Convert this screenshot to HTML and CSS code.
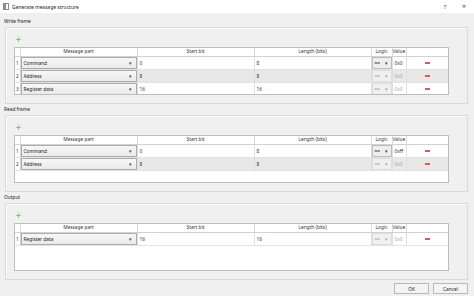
FILE: index.html
```html
<!DOCTYPE html>
<html>
<head>
<meta charset="utf-8">
<link rel="stylesheet" href="styles.css">
</head>
<body>
<div class="titlebar">
  <svg class="app-icon" width="6" height="7" viewBox="0 0 6 7"><rect x="0.5" y="0.5" width="5" height="6" fill="#fff" stroke="#8a8a8a"/><rect x="1" y="1" width="2" height="5" fill="#8c8c8c"/></svg>
  <span class="title">Generate message structure</span>
  <span class="spacer"></span>
  <span class="help">?</span>
  <span class="close">×</span>
</div>
<div class="content">
  <section class="group">
    <div class="group-title">Write frame</div>
    <div class="group-box">
      <div class="add"><svg width="5" height="5" viewBox="0 0 5 5"><path d="M2.5 0.3V4.7M0.3 2.5H4.7" stroke="#78c66a" stroke-width="1"/></svg></div>
      <div class="view">
        <table class="grid">
          <colgroup><col class="c-num"><col class="c-part"><col class="c-start"><col class="c-len"><col class="c-logic"><col class="c-val"><col class="c-rm"></colgroup>
          <thead><tr><th></th><th>Message part</th><th>Start bit</th><th>Length (bits)</th><th>Logic</th><th>Value</th><th></th></tr></thead>
          <tbody>
            <tr><td class="num">1</td><td class="cb"><div class="combo"><span>Command</span><span class="arrow">▾</span></div></td><td>0</td><td>8</td><td class="cb"><div class="combo small"><span>==</span><span class="arrow">▾</span></div></td><td>0x0</td><td class="rm"><span class="minus"></span></td></tr>
            <tr class="alt"><td class="num">2</td><td class="cb"><div class="combo"><span>Address</span><span class="arrow">▾</span></div></td><td>8</td><td>8</td><td class="cb"><div class="combo small off"><span>==</span><span class="arrow">▾</span></div></td><td class="dim">0x0</td><td class="rm"><span class="minus"></span></td></tr>
            <tr><td class="num">3</td><td class="cb"><div class="combo"><span>Register data</span><span class="arrow">▾</span></div></td><td>16</td><td>16</td><td class="cb"><div class="combo small off"><span>==</span><span class="arrow">▾</span></div></td><td class="dim">0x0</td><td class="rm"><span class="minus"></span></td></tr>
          </tbody>
        </table>
      </div>
    </div>
  </section>
  <section class="group">
    <div class="group-title">Read frame</div>
    <div class="group-box">
      <div class="add"><svg width="5" height="5" viewBox="0 0 5 5"><path d="M2.5 0.3V4.7M0.3 2.5H4.7" stroke="#78c66a" stroke-width="1"/></svg></div>
      <div class="view">
        <table class="grid">
          <colgroup><col class="c-num"><col class="c-part"><col class="c-start"><col class="c-len"><col class="c-logic"><col class="c-val"><col class="c-rm"></colgroup>
          <thead><tr><th></th><th>Message part</th><th>Start bit</th><th>Length (bits)</th><th>Logic</th><th>Value</th><th></th></tr></thead>
          <tbody>
            <tr><td class="num">1</td><td class="cb"><div class="combo"><span>Command</span><span class="arrow">▾</span></div></td><td>0</td><td>8</td><td class="cb"><div class="combo small"><span>==</span><span class="arrow">▾</span></div></td><td>0xff</td><td class="rm"><span class="minus"></span></td></tr>
            <tr class="alt"><td class="num">2</td><td class="cb"><div class="combo"><span>Address</span><span class="arrow">▾</span></div></td><td>8</td><td>8</td><td class="cb"><div class="combo small off"><span>==</span><span class="arrow">▾</span></div></td><td class="dim">0x0</td><td class="rm"><span class="minus"></span></td></tr>
          </tbody>
        </table>
      </div>
    </div>
  </section>
  <section class="group">
    <div class="group-title">Output</div>
    <div class="group-box">
      <div class="add"><svg width="5" height="5" viewBox="0 0 5 5"><path d="M2.5 0.3V4.7M0.3 2.5H4.7" stroke="#78c66a" stroke-width="1"/></svg></div>
      <div class="view">
        <table class="grid">
          <colgroup><col class="c-num"><col class="c-part"><col class="c-start"><col class="c-len"><col class="c-logic"><col class="c-val"><col class="c-rm"></colgroup>
          <thead><tr><th></th><th>Message part</th><th>Start bit</th><th>Length (bits)</th><th>Logic</th><th>Value</th><th></th></tr></thead>
          <tbody>
            <tr><td class="num">1</td><td class="cb"><div class="combo"><span>Register data</span><span class="arrow">▾</span></div></td><td>16</td><td>16</td><td class="cb"><div class="combo small off"><span>==</span><span class="arrow">▾</span></div></td><td class="dim">0x0</td><td class="rm"><span class="minus"></span></td></tr>
          </tbody>
        </table>
      </div>
    </div>
  </section>
  <div class="buttons">
    <button class="btn">OK</button>
    <button class="btn">Cancel</button>
  </div>
</div>
</body>
</html>
```
FILE: styles.css
```css
* { box-sizing: border-box; }
html, body { margin: 0; padding: 0; }
body {
  width: 474px;
  height: 296px;
  overflow: hidden;
  background: #f0f0f0;
  font-family: "Noto Sans", "Open Sans", sans-serif;
  font-size: 4.8px;
  color: #333;
}
.titlebar {
  height: 13px;
  background: #ffffff;
  display: flex;
  align-items: center;
  padding-left: 3px;
}
.app-icon { display: block; margin-right: 3px; }
.title { font-size: 5px; color: #222; }
.spacer { flex: 1; }
.help { width: 10px; text-align: center; font-size: 5.5px; margin-right: 4px; color: #333; }
.close { width: 20px; text-align: center; font-size: 7px; color: #444; }

.content { padding: 3px 6px 0 5px; }
.group-title { height: 11px; line-height: 11px; margin-left: -1px; color: #222; }
.group-box {
  height: 77px;
  border: 1px solid #d9d9d9;
  box-shadow: inset 1px 1px 0 #fbfbfb;
  padding: 8px 18px 0 8px;
}
.add { height: 7px; margin-bottom: 4px; display: flex; align-items: center; padding-left: 2px; }
.add svg { display: block; }
.view {
  height: 48px;
  background: #ffffff;
  border: 1px solid #bdbdbd;
  overflow: hidden;
}
.grid { border-collapse: collapse; table-layout: fixed; width: 433px; }
.c-num { width: 5px; }
.c-part { width: 117px; }
.c-start { width: 117px; }
.c-len { width: 117px; }
.c-logic { width: 21px; }
.c-val { width: 14px; }
.c-rm { width: 42px; }
.grid th {
  height: 8px;
  padding: 0;
  font-weight: normal;
  text-align: center;
  line-height: 7px;
  border-right: 1px solid #dadada;
  border-bottom: 1px solid #d2d2d2;
  background: #ffffff;
  white-space: nowrap;
  overflow: hidden;
  color: #333;
}
.grid td {
  height: 13px;
  padding: 0 0 0 2px;
  border-right: 1px solid #dedede;
  border-bottom: 1px solid #e2e2e2;
  white-space: nowrap;
  overflow: hidden;
  color: #333;
}
.grid tr.alt td { background: #e9e8e6; }
.grid td.num { padding: 0 0 0 1px; background: #fff; border-right-color: #d2d2d2; }
.grid tr.alt td.num { background: #fff; }
.grid td.cb { padding: 0; }
.grid td.dim { color: #a8a8a8; }
.grid td.rm { padding: 0; }
.combo {
  height: 12px;
  display: flex;
  align-items: center;
  justify-content: space-between;
  padding: 0 4px 0 2px;
  border: 1px solid #acacac;
  background: linear-gradient(#f7f7f7, #eaeaea);
  color: #222;
}
.combo .arrow { font-size: 5px; color: #444; }
.combo.small { padding: 0 3px 0 2px; border-color: #bbbbbb; background: #eeeeee; }
.combo.off { color: #a4a4a4; border-color: #dddddd; background: #f0f0f0; }
.combo.off .arrow { color: #aaa; }
.minus {
  display: block;
  width: 5px;
  height: 2px;
  margin: 0 auto;
  background: #d35a67;
}
.buttons {
  display: flex;
  justify-content: flex-end;
  gap: 4px;
  margin-top: 3px;
}
.btn {
  width: 35px;
  height: 11px;
  padding: 0;
  font-family: inherit;
  font-size: 4.8px;
  color: #222;
  background: #f4f4f4;
  border: 1px solid #b8b8b8;
  border-radius: 0;
}
```
